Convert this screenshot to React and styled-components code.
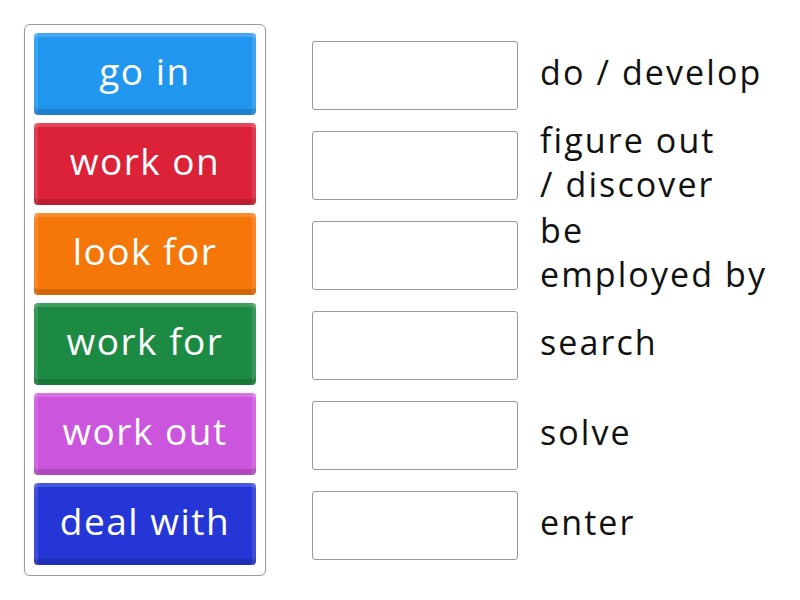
import styled, { createGlobalStyle } from "styled-components";

const Global = createGlobalStyle`
  body {
    margin: 0;
    background: #fff;
    font-family: "Open Sans", "DejaVu Sans", sans-serif;
  }
`;

const Page = styled.div`
  display: flex;
  align-items: flex-start;
  gap: 46px;
  padding: 24px 0 0 24px;
`;

const Stack = styled.div`
  width: 222px;
  display: flex;
  flex-direction: column;
  gap: 8px;
  padding: 8px 9px 10px;
  border: 1px solid #9a9a9a;
  border-radius: 6px;
  box-shadow: 0 1px 2px rgba(0, 0, 0, 0.15);
`;

const Tile = styled.div`
  height: 82px;
  border-radius: 4px;
  background: ${(p) => p.$bg};
  box-shadow:
    inset 0 -6px 0 rgba(0, 0, 0, 0.14),
    inset 4px 0 0 rgba(255, 255, 255, 0.12),
    inset -4px 0 0 rgba(255, 255, 255, 0.12),
    inset 0 4px 0 rgba(255, 255, 255, 0.16);
  display: flex;
  align-items: center;
  justify-content: center;
  color: #fff;
  font-size: 37px;
  letter-spacing: 1.5px;
  white-space: nowrap;
  padding-bottom: 8px;
  box-sizing: border-box;
`;

const Answers = styled.div`
  display: flex;
  flex-direction: column;
  padding-top: 6px;
`;

const Row = styled.div`
  height: 90px;
  display: flex;
  align-items: center;
  gap: 22px;
`;

const Slot = styled.div`
  width: 204px;
  height: 67px;
  border: 1px solid #9a9a9a;
  border-radius: 3px;
  background: #fff;
  flex-shrink: 0;
`;

const Label = styled.div`
  font-size: 34px;
  letter-spacing: 2.1px;
  line-height: 44px;
  color: #111;
  white-space: nowrap;
  padding-bottom: 6px;
`;

const tiles = [
  { text: "go in", bg: "#2196ee" },
  { text: "work on", bg: "#dc2238" },
  { text: "look for", bg: "#f57609" },
  { text: "work for", bg: "#1c8a43" },
  { text: "work out", bg: "#cc55dd" },
  { text: "deal with", bg: "#2436d6" },
];

const answers = [
  ["do / develop"],
  ["figure out", "/ discover"],
  ["be", "employed by"],
  ["search"],
  ["solve"],
  ["enter"],
];

export default function App() {
  return (
    <>
      <Global />
      <Page>
        <Stack>
          {tiles.map((t) => (
            <Tile key={t.text} $bg={t.bg}>
              {t.text}
            </Tile>
          ))}
        </Stack>
        <Answers>
          {answers.map((lines) => (
            <Row key={lines.join(" ")}>
              <Slot />
              <Label>
                {lines.map((l, i) => (
                  <div key={i}>{l}</div>
                ))}
              </Label>
            </Row>
          ))}
        </Answers>
      </Page>
    </>
  );
}
